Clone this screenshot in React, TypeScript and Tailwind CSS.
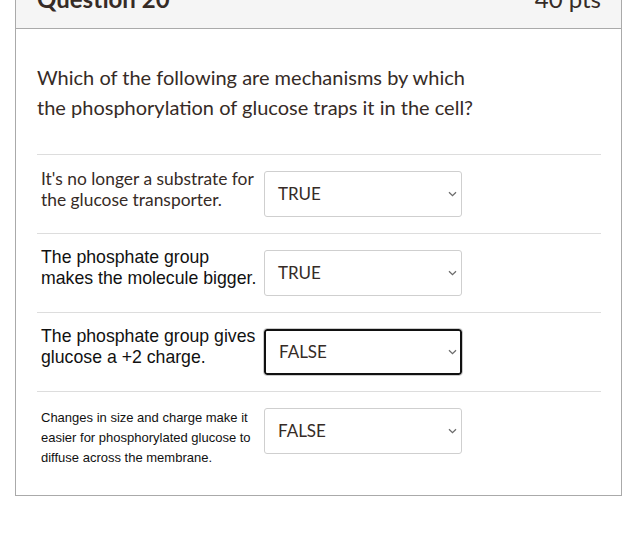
type Row = {
  text: string;
  answer: string;
  font: "lato" | "arial" | "arialSmall";
  focused?: boolean;
};

const rows: Row[] = [
  {
    text: "It's no longer a substrate for the glucose transporter.",
    answer: "TRUE",
    font: "lato",
  },
  {
    text: "The phosphate group makes the molecule bigger.",
    answer: "TRUE",
    font: "arial",
  },
  {
    text: "The phosphate group gives glucose a +2 charge.",
    answer: "FALSE",
    font: "arial",
    focused: true,
  },
  {
    text: "Changes in size and charge make it easier for phosphorylated glucose to diffuse across the membrane.",
    answer: "FALSE",
    font: "arialSmall",
  },
];

const textClass = {
  lato: "font-['Lato',sans-serif] text-[17.4px] leading-[21px] text-[#362b26] -mt-[3px]",
  arial:
    "font-['Liberation_Sans',Arial,sans-serif] text-[17.7px] leading-[21px] text-[#111] -mt-[3px]",
  arialSmall:
    "font-['Liberation_Sans',Arial,sans-serif] text-[13px] leading-[20px] text-[#111]",
};

function AnswerSelect({ value, focused }: { value: string; focused?: boolean }) {
  return (
    <div
      className={
        "relative flex h-[46px] w-[198px] shrink-0 items-center rounded-[3px] bg-white pl-[13px] " +
        (focused
          ? "border-2 border-[#111] outline outline-1 outline-[#ccc]"
          : "border border-[#cfcfcf]")
      }
    >
      <span className="font-['Lato',sans-serif] text-[17px] text-[#362b26]">
        {value}
      </span>
      {/* select arrow */}
      <svg
        className={
          "absolute top-1/2 -translate-y-1/2 " +
          (focused ? "right-[3px]" : "right-[4px]")
        }
        width="9"
        height="6"
        viewBox="0 0 9 6"
        fill="none"
      >
        <path d="M1 1.2L4.5 4.6L8 1.2" stroke="#6b6b6b" strokeWidth="1.3" />
      </svg>
    </div>
  );
}

export default function App() {
  return (
    <div className="h-[542px] w-[627px] overflow-hidden bg-white">
      <div className="ml-[15px] w-[607px] border-x border-b border-[#aaa]">
        <div className="flex h-[29px] items-start justify-between border-b border-[#aaa] bg-[#f5f5f5] pl-[21px] pr-[20px]">
          <h2 className="-mt-[13px] font-['Lato',sans-serif] text-[24px] font-bold leading-none text-[#362b26]">
            Question 20
          </h2>
          <span className="-mt-[13px] font-['Lato',sans-serif] text-[24px] leading-none text-[#362b26]">
            40 pts
          </span>
        </div>
        <div className="pl-[21px] pr-[20px] pb-[11px] pt-[33px]">
          <p className="w-[440px] font-['Lato',sans-serif] text-[20px] leading-[30px] text-[#362b26]">
            Which of the following are mechanisms by which the phosphorylation
            of glucose traps it in the cell?
          </p>
          <div className="mt-[32px]">
            {rows.map((row) => (
              <div
                key={row.text}
                className="flex gap-[4px] border-t border-[#ddd] py-[16px] pl-[4px]"
              >
                <div className={"w-[219px] " + textClass[row.font]}>
                  {row.text}
                </div>
                <AnswerSelect value={row.answer} focused={row.focused} />
              </div>
            ))}
          </div>
        </div>
      </div>
    </div>
  );
}
